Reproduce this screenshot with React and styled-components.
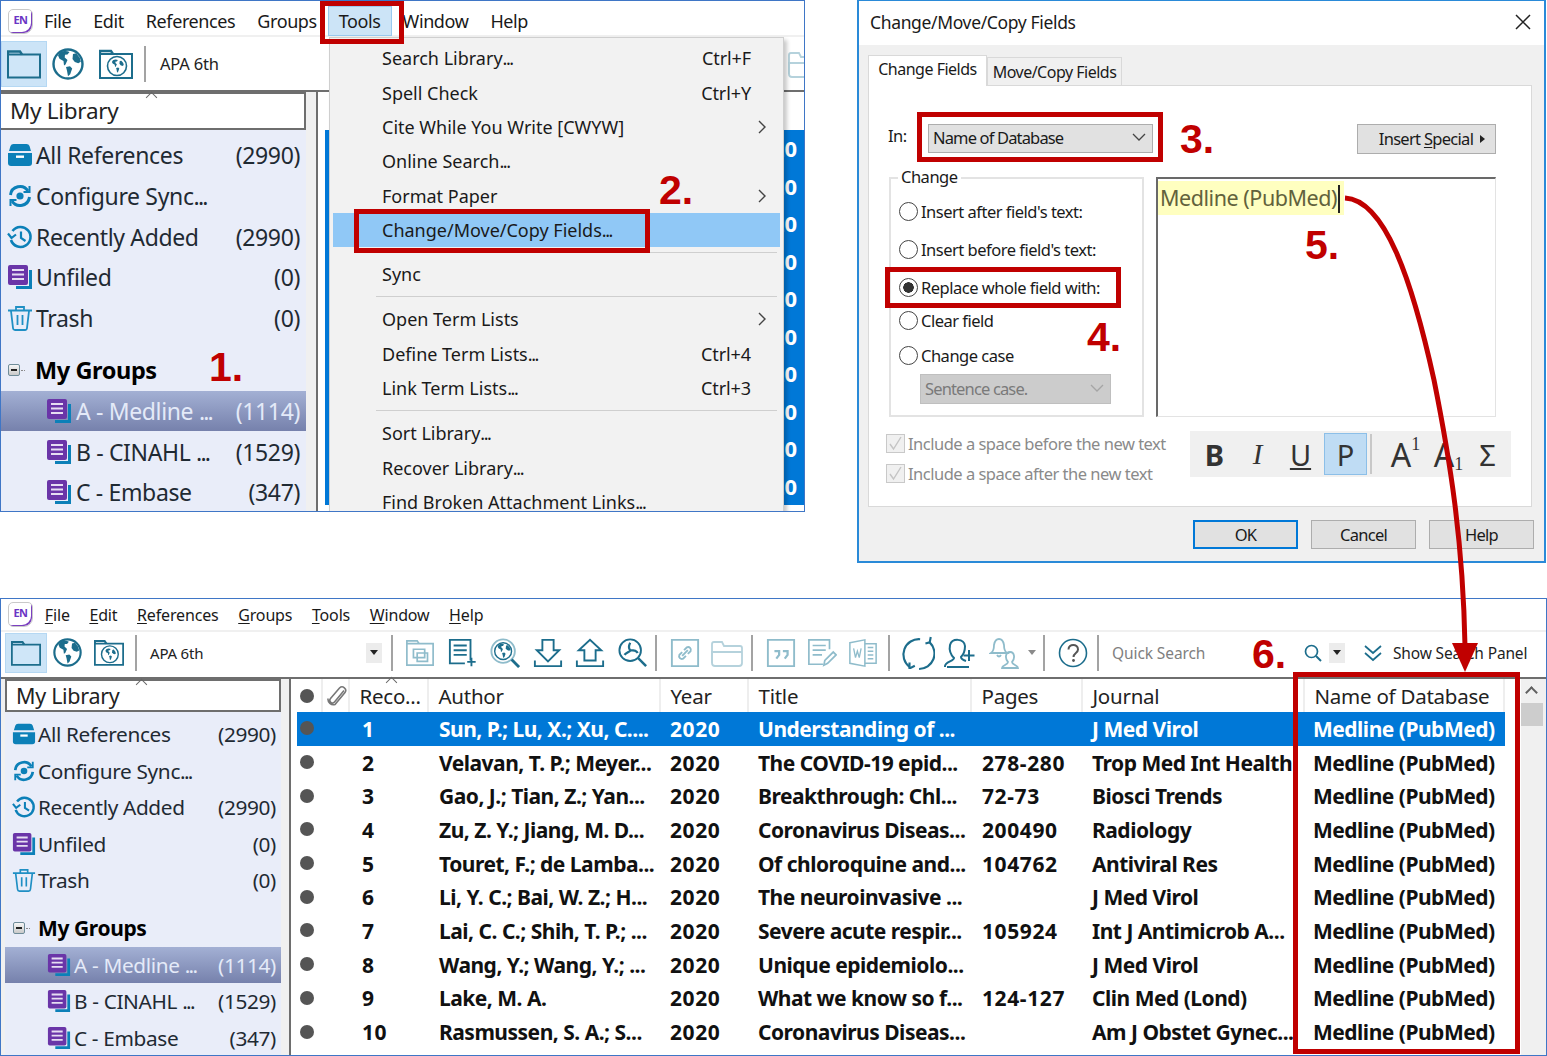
import React from 'react'
import styled, { createGlobalStyle, ThemeProvider, css } from 'styled-components'

const SANS = '"Noto Sans", "Open Sans", sans-serif'
const TEAL = '#1c6d8c'
const PALE = '#8fbccb'
const RED = '#c00000'
const HEAD_LINE = '#6e6e6e'

const topTheme = {
  menuFont: 18,
  menuSpacing: -0.4,
  menuHeight: 34,
  menuTop: 6,
  menuPad: 10,
  logoGap: 0,
  stripHeight: 2,
  toolbarHeight: 55,
  headerHeight: 38,
  headerFont: 22.5,
  rowHeight: 40.7,
  rowFont: 23,
  groupFont: 23.5,
  iconSize: 26,
  iconLeft: 6,
  textLeft: 3,
  groupLeft: 45,
  groupText: 4,
  countRight: 6,
  sideWidth: 305,
  groupGap: 11.5,
  listTop: 5,
  dotGap: 10,
}

const bottomTheme = {
  menuFont: 16,
  menuSpacing: -0.15,
  menuHeight: 31,
  menuTop: 0,
  menuPad: 8.8,
  logoGap: 2,
  stripHeight: 2,
  toolbarHeight: 47,
  headerHeight: 33,
  headerFont: 21.5,
  rowHeight: 36.5,
  rowFont: 20.8,
  groupFont: 21,
  iconSize: 24,
  iconLeft: 7,
  textLeft: 2,
  groupLeft: 42,
  groupText: 3,
  countRight: 5,
  sideWidth: 276,
  groupGap: 11.5,
  listTop: 4,
  dotGap: 8,
}

const GlobalStyle = createGlobalStyle`
  html, body {
    margin: 0;
    padding: 0;
    background: #ffffff;
    font-family: ${SANS};
    color: #1a1a1a;
  }
`

const Canvas = styled.div`
  position: relative;
  width: 1547px;
  height: 1056px;
  overflow: hidden;
  background: #ffffff;
`

const AppWindow = styled.section`
  position: absolute;
  left: ${({ $x }) => $x}px;
  top: ${({ $y }) => $y}px;
  width: ${({ $w }) => $w}px;
  height: ${({ $h }) => $h}px;
  box-sizing: border-box;
  border: 1px solid #3f76c6;
  background: #ffffff;
  display: flex;
  flex-direction: column;
  overflow: hidden;
`

const MenuBar = styled.nav`
  display: flex;
  align-items: center;
  flex: none;
  box-sizing: border-box;
  height: ${({ theme }) => theme.menuHeight + theme.stripHeight}px;
  padding-left: 7px;
  padding-top: ${({ theme }) => theme.menuTop}px;
  border-bottom: ${({ theme }) => theme.stripHeight}px solid #f0f0f0;
`

const Logo = styled.div`
  width: 25px;
  height: 25px;
  margin-right: ${({ theme }) => theme.logoGap}px;
  box-sizing: border-box;
  border: 1px solid #c9c9c9;
  border-radius: 5px;
  border-bottom-right-radius: 9px;
  font: 700 11px ${SANS};
  line-height: 20px;
  color: #6a35c4;
  text-align: center;
  letter-spacing: -0.5px;
  box-shadow: inset -2px -2px 0 -1px #7b3fc0;
`

const MenuItem = styled.span`
  font-size: ${({ theme }) => theme.menuFont}px;
  line-height: 24px;
  letter-spacing: ${({ theme }) => theme.menuSpacing}px;
  padding: 2px ${({ theme }) => theme.menuPad}px;
  box-sizing: border-box;
  border: 1px solid transparent;
  white-space: nowrap;

  ${({ $open }) =>
    $open &&
    css`
      background: #cce4f7;
      border-color: #99c9ef;
    `}

  u {
    text-underline-offset: 2px;
  }
`

const Toolbar = styled.div`
  display: flex;
  align-items: center;
  flex: none;
  height: ${({ theme }) => theme.toolbarHeight}px;
  box-sizing: border-box;
  border-bottom: 2px solid ${HEAD_LINE};
  padding-left: ${({ $left }) => $left || 0}px;
  padding-bottom: ${({ $bottom }) => $bottom || 0}px;
`

const ToolButton = styled.div`
  display: flex;
  align-items: center;
  justify-content: center;
  flex: none;
  width: ${({ $w }) => $w || 42}px;
  height: ${({ $h }) => $h || 40}px;
  box-sizing: border-box;
  padding-left: ${({ $shift }) => $shift || 0}px;

  ${({ $active }) =>
    $active &&
    css`
      background: #cce4f7;
      border: 1px solid #b5d8f3;
    `}
`

const ToolSep = styled.span`
  flex: none;
  width: 2px;
  height: 36px;
  margin: 0 ${({ $r }) => $r}px 0 ${({ $l }) => $l}px;
  background: #a3a3a3;
`

const StyleName = styled.span`
  flex: none;
  width: ${({ $w }) => $w || 'auto'};
  font-size: ${({ $size }) => $size}px;
  letter-spacing: -0.2px;
  color: #222222;
  white-space: nowrap;
`

const DropButton = styled.span`
  flex: none;
  display: flex;
  align-items: center;
  justify-content: center;
  width: ${({ $plain }) => ($plain ? 8 : 16)}px;
  height: 20px;
  background: ${({ $plain }) => ($plain ? 'transparent' : '#ececec')};

  &::after {
    content: '';
    border: 4px solid transparent;
    border-top: 5px solid ${({ $plain }) => ($plain ? '#8a8a8a' : '#222222')};
    border-bottom: 0;
  }
`

const QuickSearch = styled.span`
  flex: none;
  width: 184px;
  font-size: 15.5px;
  color: #7f7f7f;
  letter-spacing: -0.1px;
`

const SearchPanelLabel = styled.span`
  flex: none;
  font-size: 15.5px;
  letter-spacing: -0.15px;
  color: #1f1f1f;
  white-space: nowrap;
`

const MainArea = styled.div`
  flex: 1;
  min-height: 0;
  display: flex;
  padding-left: ${({ $left }) => $left || 0}px;
  background: #f0f0f0;
`

const Sidebar = styled.aside`
  flex: none;
  width: ${({ theme }) => theme.sideWidth}px;
  background: #e9edf9;
`

const SideHeader = styled.div`
  position: relative;
  height: ${({ theme }) => theme.headerHeight}px;
  box-sizing: border-box;
  margin-bottom: ${({ theme }) => theme.listTop}px;
  padding-left: 9px;
  background: #ffffff;
  border: 2px solid ${HEAD_LINE};
  border-left-width: ${({ $noLeft }) => ($noLeft ? 0 : 2)}px;
  font-size: ${({ theme }) => theme.headerFont}px;
  line-height: ${({ theme }) => theme.headerHeight - 4}px;
  letter-spacing: -0.3px;
  color: #222222;
`

const SortCaret = styled.span`
  position: absolute;
  left: ${({ $x }) => $x}px;
  top: ${({ $top }) => $top || -1}px;
  width: 8px;
  height: 8px;
  border-left: 1.5px solid #666666;
  border-top: 1.5px solid #666666;
  transform: rotate(45deg) scale(0.9);
`

const SideRow = styled.div`
  display: flex;
  align-items: center;
  height: ${({ theme }) => theme.rowHeight}px;
  padding-left: ${({ $group, theme }) => ($group ? theme.groupLeft : theme.iconLeft)}px;
  padding-right: ${({ theme }) => theme.countRight}px;
  font-size: ${({ theme }) => theme.rowFont}px;
  letter-spacing: -0.35px;
  color: #1f2a33;

  ${({ $selected }) =>
    $selected &&
    css`
      background: linear-gradient(#a3b0d4, #7681ac);
      color: #e4eaf8;
    `}
`

const SideLabel = styled.span`
  margin-left: ${({ $group, theme }) => ($group ? theme.groupText : theme.textLeft)}px;
  white-space: nowrap;
`

const SideCount = styled.span`
  margin-left: auto;
`

const TightDots = styled.span`
  letter-spacing: -0.08em;
`

const GroupsHead = styled.div`
  display: flex;
  align-items: center;
  height: ${({ theme }) => theme.rowHeight}px;
  margin-top: ${({ theme }) => theme.groupGap}px;
  padding-left: ${({ theme }) => theme.iconLeft + 1}px;
  font-size: ${({ theme }) => theme.groupFont}px;
  font-weight: 700;
  letter-spacing: -0.4px;
  color: #000000;
`

const GroupToggle = styled.span`
  display: flex;
  align-items: center;
  justify-content: center;
  width: 12px;
  height: 12px;
  box-sizing: border-box;
  border: 1px solid #6f8c99;
  border-radius: 2px;
  background: linear-gradient(#f6f6f6, #c9c9c9);

  &::before {
    content: '';
    width: 6px;
    height: 2px;
    background: #222222;
  }
`

const GroupDots = styled.span`
  width: 4px;
  margin: 0 ${({ theme }) => theme.dotGap}px 0 1px;
  border-top: 1px dotted #8a8a8a;
`

const Splitter = styled.div`
  flex: none;
  width: ${({ $w }) => $w}px;
  box-sizing: border-box;
  background: #f0f0f0;
  border-right: 2px solid ${HEAD_LINE};
`

const BackList = styled.div`
  flex: 1;
  background: #ffffff;
  padding-top: 38px;
  padding-left: 7px;
`

const BackRow = styled.div`
  height: 37.5px;
  padding-right: 7px;
  background: #0078d7;
  color: #ffffff;
  font-size: 22px;
  font-weight: 700;
  line-height: 37px;
  text-align: right;
`

const ToolsMenu = styled.div`
  position: absolute;
  left: 328px;
  top: 36px;
  width: 455px;
  height: 476px;
  box-sizing: border-box;
  padding: 3px 3px 0 3px;
  background: #f2f2f2;
  border: 1px solid #cfcfcf;
  box-shadow: 3px 3px 4px rgba(0, 0, 0, 0.22);
`

const ToolsItem = styled.div`
  display: flex;
  align-items: center;
  height: 34.4px;
  padding: 0 18px 0 49px;
  font-size: 18px;
  color: #1a1a1a;
  white-space: nowrap;

  ${({ $hot }) =>
    $hot &&
    css`
      background: #90c8f6;
    `}
`

const Shortcut = styled.span`
  margin-left: auto;
  width: 52px;
  margin-right: 11px;
  text-align: right;
  letter-spacing: -0.1px;
`

const Submenu = styled.span`
  margin-left: auto;
  display: flex;
  width: 8px;
  margin-right: -4px;

  svg {
    flex: none;
  }
`

const MenuRule = styled.div`
  height: 1px;
  margin: ${({ $m }) => $m}px 3px ${({ $m }) => $m}px 43px;
  background: #cfcfcf;
`

/* change/move/copy dialog */

const DialogWindow = styled.section`
  position: absolute;
  left: ${({ $x }) => $x}px;
  top: ${({ $y }) => $y}px;
  width: ${({ $w }) => $w}px;
  height: ${({ $h }) => $h}px;
  box-sizing: border-box;
  border: 2px solid #2a8ad8;
  border-top-width: 1px;
  background: #f0f0f0;
  display: flex;
  flex-direction: column;
  font-size: 16.5px;
  letter-spacing: -0.5px;
  color: #1a1a1a;
`

const TitleBar = styled.header`
  display: flex;
  align-items: center;
  justify-content: space-between;
  flex: none;
  height: 44px;
  padding: 0 12px 2px 11px;
  box-sizing: border-box;
  background: #ffffff;
  font-size: 17.5px;
  letter-spacing: -0.35px;
`

const TabRow = styled.div`
  display: flex;
  align-items: flex-end;
  flex: none;
  height: 40px;
  padding-left: 9px;
`

const Tab = styled.div`
  box-sizing: border-box;
  display: flex;
  align-items: center;
  justify-content: center;
  height: ${({ $on }) => ($on ? 31 : 28)}px;
  width: ${({ $w }) => $w}px;
  margin-bottom: ${({ $on }) => ($on ? -1 : 0)}px;
  padding-bottom: ${({ $on }) => ($on ? 4 : 0)}px;
  background: ${({ $on }) => ($on ? '#ffffff' : '#f0f0f0')};
  border: 1px solid #d9d9d9;
  border-bottom: 0;
  font-size: 16px;
  z-index: ${({ $on }) => ($on ? 1 : 0)};
`

const TabPanel = styled.div`
  flex: none;
  height: 422px;
  margin: 0 12px 0 9px;
  box-sizing: border-box;
  padding-top: 37px;
  background: #ffffff;
  border: 1px solid #d9d9d9;
`

const InRow = styled.div`
  display: flex;
  align-items: center;
  height: 31px;
  padding: 0 35px 0 19px;
`

const InLabel = styled.span`
  width: 40px;
  margin-top: -6px;
`

const Select = styled.div`
  display: flex;
  align-items: center;
  justify-content: space-between;
  box-sizing: border-box;
  width: ${({ $w }) => $w}px;
  height: ${({ $h }) => $h}px;
  padding: 0 6px 2px 4px;
  background: ${({ $disabled }) => ($disabled ? '#cccccc' : '#e1e1e1')};
  border: 1px solid ${({ $disabled }) => ($disabled ? '#bfbfbf' : '#adadad')};
  color: ${({ $disabled }) => ($disabled ? '#7a7a7a' : '#1a1a1a')};
  margin: ${({ $m }) => $m || 0};
  letter-spacing: -0.85px;
`

const FlatButton = styled.div`
  display: flex;
  align-items: center;
  justify-content: center;
  gap: 7px;
  box-sizing: border-box;
  width: ${({ $w }) => $w}px;
  height: ${({ $h }) => $h}px;
  margin-left: ${({ $auto }) => ($auto ? 'auto' : 0)};
  padding-left: ${({ $inset }) => $inset || 0}px;
  background: #e1e1e1;
  border: ${({ $primary }) => ($primary ? '2px solid #0078d7' : '1px solid #adadad')};
  letter-spacing: -0.7px;

  u {
    text-underline-offset: 2px;
  }
`

const RightTriangle = styled.span`
  border: 4px solid transparent;
  border-left: 5px solid #222222;
  border-right: 0;
`

const ChangeArea = styled.div`
  display: flex;
  gap: 12px;
  margin-top: 23px;
  padding-left: 20px;
  height: 240px;
`

const ChangeGroup = styled.div`
  position: relative;
  flex: none;
  width: 255px;
  box-sizing: border-box;
  padding: 15px 0 0 8px;
  border: 2px solid #e3e3e3;
`

const GroupLegend = styled.span`
  position: absolute;
  left: 7px;
  top: -14px;
  padding: 0 3px;
  background: #ffffff;
`

const RadioRow = styled.div`
  display: flex;
  align-items: center;
  gap: 3px;
  height: 34px;
  margin-top: ${({ $gap }) => $gap || 0}px;
`

const Radio = styled.span`
  flex: none;
  width: 19px;
  height: 19px;
  box-sizing: border-box;
  border-radius: 50%;
  border: 1.5px solid #444444;
  background: ${({ $on }) => ($on ? 'radial-gradient(circle, #333333 0 5px, #ffffff 5.5px)' : '#ffffff')};
`

const FieldBox = styled.div`
  flex: none;
  width: 340px;
  box-sizing: border-box;
  padding: 2px 0 0 0;
  border: 1px solid #e3e3e3;
  border-top: 2px solid #696969;
  border-left: 2px solid #696969;
`

const FieldText = styled.span`
  display: inline-block;
  width: 186px;
  height: 34px;
  padding-left: 2px;
  box-sizing: border-box;
  background: #ffffc0;
  font-size: 21.5px;
  line-height: 34px;
  letter-spacing: -0.45px;
  color: #62623c;
  white-space: nowrap;
`

const Caret = styled.span`
  display: inline-block;
  width: 2px;
  height: 28px;
  margin-left: 1px;
  vertical-align: -7px;
  background: #222222;
`

const OptionsRow = styled.div`
  display: flex;
  justify-content: space-between;
  margin-top: 14px;
  padding: 0 20px 0 17px;
`

const CheckList = styled.div`
  display: flex;
  flex-direction: column;
  gap: 10px;
  padding-top: 2px;
`

const CheckRow = styled.div`
  display: flex;
  align-items: center;
  gap: 3px;
  height: 20px;
  color: #8a8a8a;
`

const CheckBox = styled.span`
  display: flex;
  flex: none;
  width: 19px;
  height: 19px;
  box-sizing: border-box;
  background: #f0f0f0;
  border: 1px solid #c9c9c9;
`

const FormatBar = styled.div`
  display: flex;
  align-items: center;
  width: 321px;
  height: 46px;
  box-sizing: border-box;
  padding-left: 3px;
  background: #f0f0f0;
`

const FormatButton = styled.span`
  display: flex;
  align-items: center;
  justify-content: center;
  flex: none;
  width: 43px;
  height: 42px;
  margin-left: ${({ $ml }) => $ml || 0}px;
  box-sizing: border-box;
  font-family: ${({ $serif }) => ($serif ? '"Liberation Serif", serif' : SANS)};
  font-size: ${({ $large }) => ($large ? 32 : 29)}px;
  font-weight: ${({ $bold }) => ($bold ? 700 : 400)};
  font-style: ${({ $italic }) => ($italic ? 'italic' : 'normal')};
  letter-spacing: 0;
  color: #333333;

  ${({ $on }) =>
    $on &&
    css`
      background: #bfdcf4;
      border: 1px solid #8cbfe8;
    `}
`

const FormatScript = styled.span`
  font-family: "Liberation Serif", serif;
  font-size: 18px;
  position: relative;
  top: ${({ $up }) => ($up ? -10 : 10)}px;
`

const FormatSep = styled.span`
  flex: none;
  width: 2px;
  height: 40px;
  margin: 0 1px 0 3px;
  background: #c8c8c8;
`

const DialogFooter = styled.footer`
  display: flex;
  justify-content: flex-end;
  gap: 13px;
  padding: 13px 10px 0 0;
`

/* reference list */

const LIST_COLUMNS = '26px 27px 79px 232px 88px 223px 111px 222px 200px'

const ListPane = styled.div`
  flex: none;
  width: 1230px;
  background: #ffffff;
  padding-left: 6px;
  box-sizing: border-box;
`

const ListHeader = styled.div`
  position: relative;
  display: grid;
  grid-template-columns: ${LIST_COLUMNS};
  width: 1208px;
  height: 33px;
  align-items: stretch;
  font-size: 20.5px;
  letter-spacing: -0.25px;
  color: #222222;
`

const HeadCell = styled.div`
  display: flex;
  align-items: center;
  padding-left: 9.5px;
  overflow: hidden;
  white-space: nowrap;
  border-right: 2px solid #eeeeee;
`

const IconHead = styled(HeadCell)`
  padding-left: ${({ $left }) => $left}px;
`

const ListRow = styled.div`
  display: grid;
  grid-template-columns: ${LIST_COLUMNS};
  width: 1208px;
  height: 33.7px;
  align-items: center;
  font-size: 21px;
  font-weight: 700;
  letter-spacing: -0.5px;
  color: ${({ $selected }) => ($selected ? '#ffffff' : '#111111')};
  background: ${({ $selected }) => ($selected ? '#0078d7' : 'transparent')};
`

const ReadDot = styled.span`
  width: 14px;
  height: 14px;
  margin-left: 3px;
  margin-top: ${({ $up }) => ($up ? -1 : 0)}px;
  border-radius: 50%;
  background: #555555;
`

const ListCell = styled.span`
  padding-left: ${({ $pad }) => $pad || 9}px;
  white-space: nowrap;
  overflow: hidden;
  letter-spacing: ${({ $num }) => ($num ? '0.6px' : 'inherit')};
`

const ScrollBar = styled.div`
  flex: 1;
  position: relative;
  background: #f0f0f0;
`

const ScrollThumb = styled.div`
  position: absolute;
  left: 0;
  right: 3px;
  top: 24px;
  height: 23px;
  background: #cdcdcd;
`

const ScrollUp = styled.span`
  position: absolute;
  left: 6px;
  top: 9px;
  width: 7px;
  height: 7px;
  border-left: 2.5px solid #606060;
  border-top: 2.5px solid #606060;
  transform: rotate(45deg);
`

/* red annotations */

const MarkBox = styled.div`
  position: absolute;
  left: ${({ $x }) => $x}px;
  top: ${({ $y }) => $y}px;
  width: ${({ $w }) => $w}px;
  height: ${({ $h }) => $h}px;
  box-sizing: border-box;
  border: 5px solid ${RED};
  pointer-events: none;
`

const MarkNumber = styled.span`
  position: absolute;
  left: ${({ $x }) => $x}px;
  top: ${({ $y }) => $y}px;
  font-family: "Liberation Sans", Arial, sans-serif;
  font-size: 41px;
  font-weight: 700;
  line-height: 1;
  color: ${RED};
`

const MarkArrow = styled.svg`
  position: absolute;
  left: 0;
  top: 0;
  pointer-events: none;
`

/* icons */

const AllRefsIcon = ({ size }) => (
  <svg width={size} height={size} viewBox="0 0 26 26">
    <path d="M2 9 3.5 4Q4.2 2 6.5 2h13q2.3 0 3 2L24 9z" fill="#0c80b8" />
    <path d="M1 11h24v10q0 3-3 3H4q-3 0-3-3z" fill="#0c80b8" />
    <rect x="9" y="13.5" width="8" height="2.4" fill="#ffffff" />
  </svg>
)

const SyncIcon = ({ size }) => (
  <svg width={size} height={size} viewBox="0 0 26 26" fill="none" stroke="#0c80b8" strokeWidth="3">
    <path d="M3.5 12A9.5 9.5 0 0 1 21 8" />
    <path d="M22.5 14A9.5 9.5 0 0 1 5 18" />
    <path d="M22.5 3v6h-6" strokeWidth="2" />
    <path d="M3.5 23v-6h6" strokeWidth="2" />
    <circle cx="13" cy="13" r="3.6" fill="#0c80b8" stroke="none" />
  </svg>
)

const RecentIcon = ({ size }) => (
  <svg width={size} height={size} viewBox="0 0 26 26" fill="none" stroke="#0c80b8" strokeWidth="2.6">
    <path d="M5.5 7A10 10 0 1 1 4 16" />
    <path d="M1 9.5 4.5 14 9 10.5" strokeWidth="2.2" />
    <path d="M14 7.5V14l4.5 3" strokeWidth="2.2" />
  </svg>
)

const BookIcon = ({ size }) => (
  <svg width={size} height={size} viewBox="0 0 26 26">
    <path d="M7 6h18v19H9v-3h13V6z" fill="#0c80b8" />
    <rect x="1" y="1" width="20" height="20" rx="2" fill="#6a35a8" />
    <path d="M5 6h12M5 10.5h12M5 15h12" stroke="#e6def2" strokeWidth="2" />
  </svg>
)

const TrashIcon = ({ size }) => (
  <svg width={size} height={size} viewBox="0 0 26 26" fill="none" stroke="#1f8fc4" strokeWidth="1.8">
    <path d="M1 5.5h24M9 5V2h8v3" />
    <path d="M4 6l2 17q.2 2 2 2h10q1.8 0 2-2l2-17" />
    <path d="M10.5 10v10M15.5 10v10" />
  </svg>
)

const FolderIcon = ({ w, h }) => (
  <svg width={w} height={h} viewBox="0 0 34 29" fill="none" stroke={TEAL} strokeWidth="2">
    <path d="M1 28V5h32v23z" fill="#cfe6f8" />
    <path d="M1 5V2h12l2 3" strokeWidth="2.4" />
  </svg>
)

const Continents = ({ fill }) => (
  <g fill={fill}>
    <path d="M8 4.5c3-2 7-2 9.5-.5l-2 2.5-2.5.2-.3 2.8 2.8 2.5-2 4.5-1.5 1-.5-4.5-4-2.2L6 7.5z" />
    <path d="M14 19l4-.8 2.2 2.2-2 5.8-2.2 2-1-5.5z" />
    <path d="M21 6l3.2-.8 3.6 4.5 1 4-2.5 1.5-3.5-1.2-2.3-3z" />
  </g>
)

const GlobeIcon = ({ size, color = TEAL }) => (
  <svg width={size} height={size} viewBox="0 0 32 32" fill="none">
    <circle cx="16" cy="16" r="14.5" stroke={color} strokeWidth="2.4" />
    <Continents fill={color} />
  </svg>
)

const FolderGlobeIcon = ({ w, h }) => (
  <svg width={w} height={h} viewBox="0 0 34 30" fill="none">
    <path d="M1 29V5h32v24z" stroke={TEAL} strokeWidth="2" />
    <path d="M1 5V2h11l2 3" stroke={TEAL} strokeWidth="2.4" />
    <circle cx="18" cy="17" r="9.5" stroke={TEAL} strokeWidth="1.6" fill="#ffffff" />
    <g transform="translate(9.8 9) scale(0.52)">
      <Continents fill={TEAL} />
    </g>
  </svg>
)

const Strokes = ({ size, view = '0 0 32 32', color = TEAL, width = 1.8, children }) => (
  <svg width={size} height={size} viewBox={view} fill="none" stroke={color} strokeWidth={width}>
    {children}
  </svg>
)

const CopyFolderIcon = () => (
  <Strokes size={30} color={PALE}>
    <path d="M2 29V6h28v23z" />
    <path d="M2 6V3h11l2 3" />
    <path d="M9 12h12v9H9zM13 16h11v9H13z" />
  </Strokes>
)

const NewRefIcon = () => (
  <Strokes size={30} width={2}>
    <path d="M24 24V2H2v25h16" />
    <path d="M6 8h14M6 13h14M6 18h14" />
    <path d="M25 21v9M20.5 25.5h9" />
  </Strokes>
)

const GlobeSearchIcon = () => (
  <svg width="30" height="30" viewBox="0 0 32 32" fill="none">
    <circle cx="14" cy="14" r="12.5" stroke={PALE} strokeWidth="2" />
    <circle cx="14" cy="14" r="9" stroke={TEAL} strokeWidth="1.5" />
    <g transform="translate(4.5 4.5) scale(0.6)">
      <Continents fill={TEAL} />
    </g>
    <path d="M23 23l8 8" stroke={TEAL} strokeWidth="3" />
  </svg>
)

const DownloadIcon = () => (
  <Strokes size={30} width={2}>
    <path d="M10 2h12v11h6L16 25 4 13h6z" />
    <path d="M2 24v6h28v-6" />
  </Strokes>
)

const UploadIcon = () => (
  <Strokes size={30} width={2}>
    <path d="M10 24V13H4L16 2l12 11h-6v11z" />
    <path d="M2 24v6h28v-6" />
  </Strokes>
)

const PdfSearchIcon = () => (
  <Strokes size={30} width={2}>
    <circle cx="13" cy="13" r="11.5" />
    <path d="M21.5 21.5L30 30" strokeWidth="2.6" />
    <path d="M13 5c-2 4-1 7 0 8s-5 3-6 5M13 13c3 0 7 1 8 3" strokeWidth="2.4" />
  </Strokes>
)

const LinkBoxIcon = () => (
  <Strokes size={30} color={PALE} width={2}>
    <path d="M2 2h28v28H2z" />
    <path d="M13 19l6-6" stroke={PALE} />
    <path d="M13 15l-3 3a3 3 0 0 0 4 4l3-3M19 17l3-3a3 3 0 0 0-4-4l-3 3" />
  </Strokes>
)

const OpenFolderIcon = ({ w = 32, h = 28 }) => (
  <svg width={w} height={h} viewBox="0 0 32 28" fill="none" stroke="#b5d2dc" strokeWidth="1.8">
    <path d="M1 24V5q0-2 2-2h8l2 4h16q2 0 2 2v3" />
    <path d="M1 13h30v11q0 3-3 3H4q-3 0-3-3z" />
  </svg>
)

const QuoteBoxIcon = () => (
  <Strokes size={30} color={PALE} width={2}>
    <path d="M2 2h28v28H2z" />
    <path d="M9 14h5v4l-3 4M18 14h5v4l-3 4" strokeWidth="2.4" />
  </Strokes>
)

const NotesIcon = () => (
  <Strokes size={30} color={PALE} width={1.8}>
    <path d="M24 12V2H2v26h15" />
    <path d="M6 8h14M6 13h14M6 18h10" />
    <path d="M18 29l1-5 9-9 3 3-9 9z" />
  </Strokes>
)

const WordIcon = () => (
  <svg width="30" height="30" viewBox="0 0 32 32" fill="none" stroke={PALE} strokeWidth="1.6">
    <path d="M2 5l16-3v28L2 27z" />
    <path d="M18 6h12v21H18M21 10h6M21 14h6M21 18h6M21 22h6" />
    <path d="M6 11l2 10 2-7 2 7 2-10" strokeWidth="1.4" />
  </svg>
)

const CycleIcon = () => (
  <Strokes size={34} width={2}>
    <path d="M27 6a14.5 14.5 0 0 1-10 25" />
    <path d="M8 29A14.5 14.5 0 0 1 18 3" />
    <path d="M23 7l4-1 1-5M13 28l-4 2-1 0V25" />
  </Strokes>
)

const UserPlusIcon = () => (
  <Strokes size={32} width={2}>
    <path d="M1 30v-1c0-4 9-5 9-8-4-4-5-8-4-13 2-7 14-7 15 1 0 4-1 8-4 11 0 2 2 3 5 4M3 30h22" />
    <path d="M25 13v11M19.5 18.5h11" />
  </Strokes>
)

const BellUserIcon = () => (
  <Strokes size={32} color={PALE} width={1.8}>
    <path d="M2 16q3-2 3-8 1-6 5-6t5 6q0 6 3 8zM8 18q2 3 4 0" />
    <path d="M13 31c0-3 6-3 6-6-3-3-3-10 2-10s5 7 2 10c0 3 6 3 6 6z" />
  </Strokes>
)

const HelpIcon = () => (
  <svg width="30" height="30" viewBox="0 0 30 30" fill="none">
    <circle cx="15" cy="15" r="13.5" stroke={TEAL} strokeWidth="1.6" />
    <path d="M10.5 11.5c0-6 9.5-6 9.5 0 0 3.5-4.5 3.5-4.5 7.5" stroke="#555555" strokeWidth="2" />
    <circle cx="15.5" cy="22.5" r="1.4" fill="#555555" />
  </svg>
)

const LensIcon = () => (
  <Strokes size={18} view="0 0 18 18" width={1.7}>
    <circle cx="7.5" cy="7.5" r="6" />
    <path d="M12 12l5 5" strokeWidth="2" />
  </Strokes>
)

const DoubleChevronIcon = () => (
  <Strokes size={20} view="0 0 20 20" width={1.7}>
    <path d="M2 3l8 7 8-7M2 10l8 7 8-7" />
  </Strokes>
)

const ClipIcon = () => (
  <svg width="20" height="22" viewBox="0 0 20 22" fill="none" stroke="#777777" strokeWidth="1.6">
    <path d="M17 5 7.5 16.5a2.6 2.6 0 0 1-4-3.4L12.5 2.5a3.6 3.6 0 0 1 5.5 4.6L8 19a5.5 5.5 0 0 1-7-6" transform="translate(0 .5)" />
  </svg>
)

const ChevronDown = ({ color = '#444444' }) => (
  <svg width="14" height="9" viewBox="0 0 14 9" fill="none" stroke={color} strokeWidth="1.3">
    <path d="M1 1l6 6 6-6" />
  </svg>
)

const ChevronRight = () => (
  <svg width="8" height="14" viewBox="0 0 8 14" fill="none" stroke="#444444" strokeWidth="1.4">
    <path d="M1 1l6 6-6 6" />
  </svg>
)

const CheckMark = () => (
  <svg width="17" height="17" viewBox="0 0 17 17" fill="none" stroke="#c4c4c4" strokeWidth="1.4">
    <path d="M3 9l3.5 5L14 2" />
  </svg>
)

const CloseIcon = () => (
  <svg width="18" height="18" viewBox="0 0 18 18" fill="none" stroke="#222222" strokeWidth="1.5">
    <path d="M2 2l14 14M16 2L2 16" />
  </svg>
)

const LIBRARY_ROWS = [
  { label: 'All References', count: '(2990)', Icon: AllRefsIcon },
  { label: 'Configure Sync...', Icon: SyncIcon },
  { label: 'Recently Added', count: '(2990)', Icon: RecentIcon },
  { label: 'Unfiled', count: '(0)', Icon: BookIcon },
  { label: 'Trash', count: '(0)', Icon: TrashIcon },
]

const GROUP_ROWS = [
  { label: 'A - Medline ...', count: '(1114)', selected: true },
  { label: 'B - CINAHL ...', count: '(1529)' },
  { label: 'C - Embase', count: '(347)' },
]

const MENU_NAMES = ['File', 'Edit', 'References', 'Groups', 'Tools', 'Window', 'Help']

const TOOLS_MENU = [
  { label: 'Search Library...', key: 'Ctrl+F' },
  { label: 'Spell Check', key: 'Ctrl+Y' },
  { label: 'Cite While You Write [CWYW]', sub: true },
  { label: 'Online Search...' },
  { label: 'Format Paper', sub: true },
  { label: 'Change/Move/Copy Fields...', hot: true },
  { rule: true, m: 4.2 },
  { label: 'Sync' },
  { rule: true, m: 5 },
  { label: 'Open Term Lists', sub: true },
  { label: 'Define Term Lists...', key: 'Ctrl+4' },
  { label: 'Link Term Lists...', key: 'Ctrl+3' },
  { rule: true, m: 5 },
  { label: 'Sort Library...' },
  { label: 'Recover Library...' },
  { label: 'Find Broken Attachment Links...' },
]

const REFERENCES = [
  ['1', 'Sun, P.; Lu, X.; Xu, C....', 'Understanding of ...', '', 'J Med Virol'],
  ['2', 'Velavan, T. P.; Meyer...', 'The COVID-19 epid...', '278-280', 'Trop Med Int Health'],
  ['3', 'Gao, J.; Tian, Z.; Yan...', 'Breakthrough: Chl...', '72-73', 'Biosci Trends'],
  ['4', 'Zu, Z. Y.; Jiang, M. D...', 'Coronavirus Diseas...', '200490', 'Radiology'],
  ['5', 'Touret, F.; de Lamba...', 'Of chloroquine and...', '104762', 'Antiviral Res'],
  ['6', 'Li, Y. C.; Bai, W. Z.; H...', 'The neuroinvasive ...', '', 'J Med Virol'],
  ['7', 'Lai, C. C.; Shih, T. P.; ...', 'Severe acute respir...', '105924', 'Int J Antimicrob A...'],
  ['8', 'Wang, Y.; Wang, Y.; ...', 'Unique epidemiolo...', '', 'J Med Virol'],
  ['9', 'Lake, M. A.', 'What we know so f...', '124-127', 'Clin Med (Lond)'],
  ['10', 'Rasmussen, S. A.; S...', 'Coronavirus Diseas...', '', 'Am J Obstet Gynec...'],
]

const withDots = (text) =>
  text.endsWith('...') ? (
    <>
      {text.slice(0, -3)}
      <TightDots>...</TightDots>
    </>
  ) : (
    text
  )

const LibrarySide = ({ noLeft, caretX, iconSize, groupIcon }) => (
  <Sidebar>
    <SideHeader $noLeft={noLeft}>
      My Library
      <SortCaret $x={caretX} />
    </SideHeader>
    {LIBRARY_ROWS.map(({ label, count, Icon }) => (
      <SideRow key={label}>
        <Icon size={iconSize} />
        <SideLabel>{withDots(label)}</SideLabel>
        {count && <SideCount>{count}</SideCount>}
      </SideRow>
    ))}
    <GroupsHead>
      <GroupToggle />
      <GroupDots />
      My Groups
    </GroupsHead>
    {GROUP_ROWS.map(({ label, count, selected }) => (
      <SideRow key={label} $group $selected={selected}>
        <BookIcon size={groupIcon} />
        <SideLabel $group>{withDots(label)}</SideLabel>
        <SideCount>{count}</SideCount>
      </SideRow>
    ))}
  </Sidebar>
)

const TopLibrary = () => (
  <ThemeProvider theme={topTheme}>
    <AppWindow $x={0} $y={0} $w={805} $h={512}>
      <MenuBar>
        <Logo>EN</Logo>
        {MENU_NAMES.map((name) => (
          <MenuItem key={name} $open={name === 'Tools'}>
            {name}
          </MenuItem>
        ))}
      </MenuBar>
      <Toolbar>
        <ToolButton $active $w={46} $h={46}>
          <FolderIcon w={34} h={30} />
        </ToolButton>
        <ToolButton $w={42}>
          <GlobeIcon size={32} />
        </ToolButton>
        <ToolButton $w={54}>
          <FolderGlobeIcon w={34} h={30} />
        </ToolButton>
        <ToolSep $l={1} $r={14} />
        <StyleName $size={16.5} $w="628px">APA 6th</StyleName>
        <ToolButton $w={32}>
          <OpenFolderIcon />
        </ToolButton>
      </Toolbar>
      <MainArea>
        <LibrarySide noLeft caretX={146} iconSize={26} groupIcon={26} />
        <Splitter $w={12} />
        <BackList>
          {Array.from({ length: 10 }, (_, i) => (
            <BackRow key={i}>2020</BackRow>
          ))}
        </BackList>
      </MainArea>
      <ToolsMenu>
        {TOOLS_MENU.map((item, i) =>
          item.rule ? (
            <MenuRule key={i} $m={item.m} />
          ) : (
            <ToolsItem key={item.label} $hot={item.hot}>
              {withDots(item.label)}
              {item.key && <Shortcut>{item.key}</Shortcut>}
              {item.sub && (
                <Submenu>
                  <ChevronRight />
                </Submenu>
              )}
            </ToolsItem>
          ),
        )}
      </ToolsMenu>
    </AppWindow>
  </ThemeProvider>
)

const FieldsDialog = () => (
  <DialogWindow $x={857} $y={0} $w={689} $h={563}>
    <TitleBar>
      Change/Move/Copy Fields
      <CloseIcon />
    </TitleBar>
    <TabRow>
      <Tab $on $w={119}>Change Fields</Tab>
      <Tab $w={135}>Move/Copy Fields</Tab>
    </TabRow>
    <TabPanel>
      <InRow>
        <InLabel>In:</InLabel>
        <Select $w={225} $h={29}>
          Name of Database
          <ChevronDown />
        </Select>
        <FlatButton $auto $inset={11} $w={139} $h={30}>
          <span>
            Insert <u>S</u>pecial
          </span>
          <RightTriangle />
        </FlatButton>
      </InRow>
      <ChangeArea>
        <ChangeGroup>
          <GroupLegend>Change</GroupLegend>
          <RadioRow>
            <Radio />
            Insert after field's text:
          </RadioRow>
          <RadioRow $gap={4}>
            <Radio />
            Insert before field's text:
          </RadioRow>
          <RadioRow $gap={4}>
            <Radio $on />
            Replace whole field with:
          </RadioRow>
          <RadioRow $gap={-1}>
            <Radio />
            Clear field
          </RadioRow>
          <RadioRow $gap={1}>
            <Radio />
            Change case
          </RadioRow>
          <Select $disabled $w={191} $h={30} $m="2px 0 0 21px">
            Sentence case.
            <ChevronDown color="#a5a5a5" />
          </Select>
        </ChangeGroup>
        <FieldBox>
          <FieldText>
            Medline (PubMed)
            <Caret />
          </FieldText>
        </FieldBox>
      </ChangeArea>
      <OptionsRow>
        <CheckList>
          <CheckRow>
            <CheckBox>
              <CheckMark />
            </CheckBox>
            Include a space before the new text
          </CheckRow>
          <CheckRow>
            <CheckBox>
              <CheckMark />
            </CheckBox>
            Include a space after the new text
          </CheckRow>
        </CheckList>
        <FormatBar>
          <FormatButton $bold>B</FormatButton>
          <FormatButton $serif $italic>I</FormatButton>
          <FormatButton>
            <u>U</u>
          </FormatButton>
          <FormatButton $on $ml={2}>P</FormatButton>
          <FormatSep />
          <FormatButton $large $ml={11}>
            A<FormatScript $up>1</FormatScript>
          </FormatButton>
          <FormatButton $large>
            A<FormatScript>1</FormatScript>
          </FormatButton>
          <FormatButton $ml={-4}>Σ</FormatButton>
        </FormatBar>
      </OptionsRow>
    </TabPanel>
    <DialogFooter>
      <FlatButton $primary $w={105} $h={29}>OK</FlatButton>
      <FlatButton $w={105} $h={29}>Cancel</FlatButton>
      <FlatButton $w={105} $h={29}>Help</FlatButton>
    </DialogFooter>
  </DialogWindow>
)

const underlined = (name) => (
  <>
    <u>{name[0]}</u>
    {name.slice(1)}
  </>
)

const BottomLibrary = () => (
  <ThemeProvider theme={bottomTheme}>
    <AppWindow $x={0} $y={598} $w={1547} $h={458}>
      <MenuBar>
        <Logo>EN</Logo>
        {MENU_NAMES.map((name) => (
          <MenuItem key={name}>{underlined(name)}</MenuItem>
        ))}
      </MenuBar>
      <Toolbar $left={4} $bottom={4}>
        <ToolButton $active $w={42} $h={40}>
          <FolderIcon w={30} h={26} />
        </ToolButton>
        <ToolButton $w={40}>
          <GlobeIcon size={29} />
        </ToolButton>
        <ToolButton $w={44}>
          <FolderGlobeIcon w={30} h={27} />
        </ToolButton>
        <ToolSep $l={4} $r={13} />
        <StyleName $size={15} $w="216px">APA 6th</StyleName>
        <DropButton />
        <ToolSep $l={9} $r={6} />
        <ToolButton $w={42.5}><CopyFolderIcon /></ToolButton>
        <ToolButton $w={42.5}><NewRefIcon /></ToolButton>
        <ToolButton $w={42.5}><GlobeSearchIcon /></ToolButton>
        <ToolButton $w={42.5}><DownloadIcon /></ToolButton>
        <ToolButton $w={42.5}><UploadIcon /></ToolButton>
        <ToolButton $w={42.5}><PdfSearchIcon /></ToolButton>
        <ToolSep $l={1} $r={9} />
        <ToolButton $w={38}><LinkBoxIcon /></ToolButton>
        <ToolButton $w={46}><OpenFolderIcon /></ToolButton>
        <ToolSep $l={1} $r={9} />
        <ToolButton $w={38}><QuoteBoxIcon /></ToolButton>
        <ToolButton $w={44}><NotesIcon /></ToolButton>
        <ToolButton $w={38}><WordIcon /></ToolButton>
        <ToolSep $l={6} $r={8} />
        <ToolButton $w={40}><CycleIcon /></ToolButton>
        <ToolButton $w={44}><UserPlusIcon /></ToolButton>
        <ToolButton $w={46}><BellUserIcon /></ToolButton>
        <DropButton $plain />
        <ToolSep $l={7} $r={8} />
        <ToolButton $w={40}><HelpIcon /></ToolButton>
        <ToolSep $l={4} $r={13} />
        <QuickSearch>Quick Search</QuickSearch>
        <ToolButton $w={33} $h={30}><LensIcon /></ToolButton>
        <DropButton />
        <ToolButton $w={48} $h={30} $shift={8}><DoubleChevronIcon /></ToolButton>
        <SearchPanelLabel>Show Search Panel</SearchPanelLabel>
      </Toolbar>
      <MainArea $left={4}>
        <LibrarySide caretX={130} iconSize={24} groupIcon={24} />
        <Splitter $w={10} />
        <ListPane>
          <ListHeader>
            <IconHead $left={0}><ReadDot /></IconHead>
            <IconHead $left={4}><ClipIcon /></IconHead>
            <HeadCell>Reco...</HeadCell>
            <HeadCell>Author</HeadCell>
            <HeadCell>Year</HeadCell>
            <HeadCell>Title</HeadCell>
            <HeadCell>Pages</HeadCell>
            <HeadCell>Journal</HeadCell>
            <HeadCell>Name of Database</HeadCell>
            <SortCaret $x={90} $top={0} />
          </ListHeader>
          {REFERENCES.map(([num, author, title, pages, journal], i) => (
            <ListRow key={num} $selected={i === 0}>
              <ReadDot $up />
              <span />
              <ListCell $pad={12} $num>{num}</ListCell>
              <ListCell $pad={10}>{author}</ListCell>
              <ListCell $num>2020</ListCell>
              <ListCell>{title}</ListCell>
              <ListCell $pad={10} $num>{pages}</ListCell>
              <ListCell>{journal}</ListCell>
              <ListCell $pad={8}>Medline (PubMed)</ListCell>
            </ListRow>
          ))}
        </ListPane>
        <ScrollBar>
          <ScrollUp />
          <ScrollThumb />
        </ScrollBar>
      </MainArea>
    </AppWindow>
  </ThemeProvider>
)

const Annotations = () => (
  <>
    <MarkBox $x={320} $y={1} $w={84} $h={43} />
    <MarkBox $x={354} $y={209} $w={296} $h={44} />
    <MarkBox $x={917} $y={112} $w={246} $h={50} />
    <MarkBox $x={885} $y={267} $w={236} $h={41} />
    <MarkBox $x={1293} $y={672} $w={227} $h={382} />
    <MarkNumber $x={209} $y={347}>1.</MarkNumber>
    <MarkNumber $x={659} $y={170}>2.</MarkNumber>
    <MarkNumber $x={1180} $y={119}>3.</MarkNumber>
    <MarkNumber $x={1087} $y={317}>4.</MarkNumber>
    <MarkNumber $x={1305} $y={225}>5.</MarkNumber>
    <MarkNumber $x={1252} $y={634}>6.</MarkNumber>
    <MarkArrow width="1547" height="1056" viewBox="0 0 1547 1056" fill="none">
      <path
        d="M1345 198C1385 200 1412 280 1434 380C1450 460 1463 540 1465 646"
        stroke={RED}
        strokeWidth="5"
      />
      <path d="M1452 643h26l-13 29z" fill={RED} />
    </MarkArrow>
  </>
)

const App = () => (
  <Canvas>
    <GlobalStyle />
    <TopLibrary />
    <FieldsDialog />
    <BottomLibrary />
    <Annotations />
  </Canvas>
)

export default App
